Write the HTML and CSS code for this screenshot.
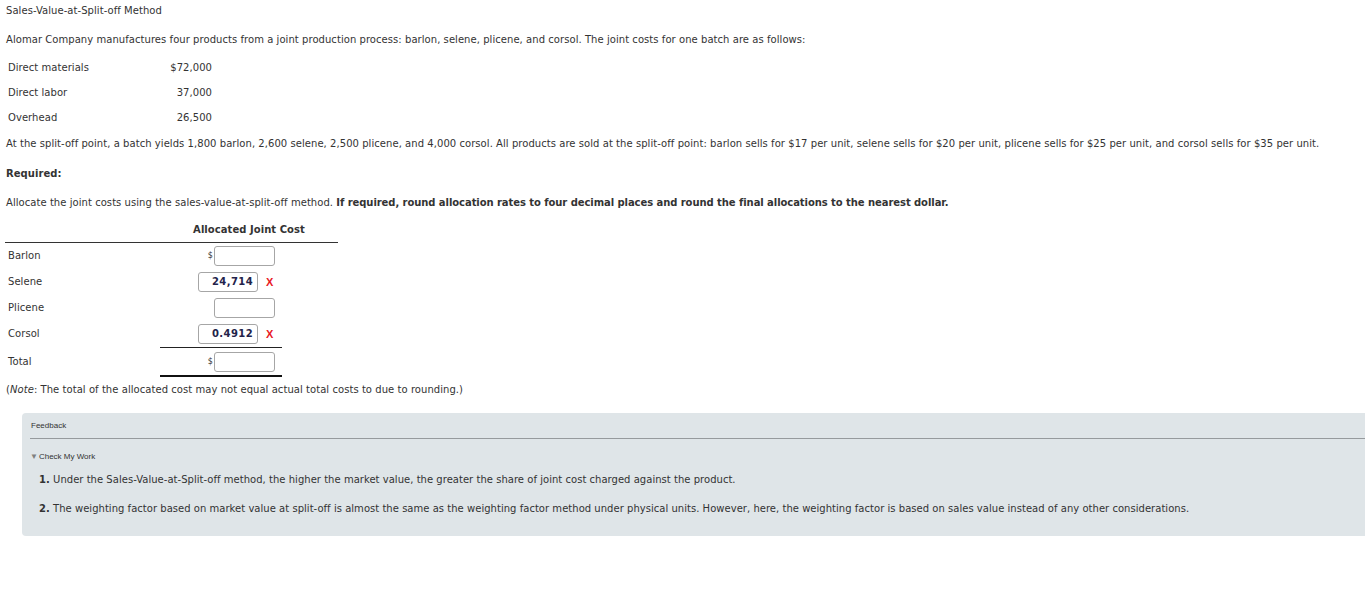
FILE: index.html
```html
<!DOCTYPE html>
<html>
<head>
<meta charset="utf-8">
<link rel="stylesheet" href="styles.css">
</head>
<body>
<div class="page">
  <div class="title">Sales-Value-at-Split-off Method</div>
  <p class="para p1">Alomar Company manufactures four products from a joint production process: barlon, selene, plicene, and corsol. The joint costs for one batch are as follows:</p>
  <div class="costs">
    <div class="cost-label">Direct materials</div><div class="cost-val">$72,000</div>
    <div class="cost-label">Direct labor</div><div class="cost-val">37,000</div>
    <div class="cost-label">Overhead</div><div class="cost-val">26,500</div>
  </div>
  <p class="para p2">At the split-off point, a batch yields 1,800 barlon, 2,600 selene, 2,500 plicene, and 4,000 corsol. All products are sold at the split-off point: barlon sells for $17 per unit, selene sells for $20 per unit, plicene sells for $25 per unit, and corsol sells for $35 per unit.</p>
  <p class="para req">Required:</p>
  <p class="para p3">Allocate the joint costs using the sales-value-at-split-off method. <b>If required, round allocation rates to four decimal places and round the final allocations to the nearest dollar.</b></p>
  <div class="alloc">
    <div class="head-blank"></div><div class="head">Allocated Joint Cost</div>
    <div class="lbl">Barlon</div><div class="val"><span class="dollar">$</span><span class="inp"></span></div><div class="pad"></div>
    <div class="lbl">Selene</div><div class="val"><span class="inp filled">24,714</span><span class="xmark">X</span></div><div class="pad"></div>
    <div class="lbl">Plicene</div><div class="val"><span class="inp"></span></div><div class="pad"></div>
    <div class="lbl">Corsol</div><div class="val sub"><span class="inp filled">0.4912</span><span class="xmark">X</span></div><div class="pad"></div>
    <div class="lbl lbl-total">Total</div><div class="val total"><span class="dollar">$</span><span class="inp"></span></div><div class="pad"></div>
  </div>
  <p class="para note">(<i>Note</i>: The total of the allocated cost may not equal actual total costs to due to rounding.)</p>
  <div class="feedback">
    <div class="fb-head">Feedback</div>
    <div class="fb-body">
      <div class="fb-check"><span class="tri">&#9660;</span>Check My Work</div>
      <p class="fb-item"><b>1.</b> Under the Sales-Value-at-Split-off method, the higher the market value, the greater the share of joint cost charged against the product.</p>
      <p class="fb-item"><b>2.</b> The weighting factor based on market value at split-off is almost the same as the weighting factor method under physical units. However, here, the weighting factor is based on sales value instead of any other considerations.</p>
    </div>
  </div>
</div>
</body>
</html>
```
FILE: styles.css
```css
html, body {
  margin: 0;
  padding: 0;
  background: #ffffff;
}
body {
  font-family: "DejaVu Sans", Verdana, sans-serif;
  font-size: 10px;
  line-height: 14px;
  color: #333333;
  letter-spacing: 0.055px;
}
.page {
  padding: 4px 0 0 6px;
}
.title {
  height: 14px;
}
.para {
  margin: 0;
  white-space: nowrap;
}
.p1 { margin-top: 15px; }
.costs {
  margin-top: 8px;
  display: grid;
  grid-template-columns: 140px 66px;
  grid-auto-rows: 25px;
  align-items: center;
}
.cost-label { padding-left: 2px; }
.cost-val { text-align: right; }
.p2 { margin-top: 7px; }
.req { margin-top: 16px; font-weight: bold; }
.p3 { margin-top: 15px; }
.p3 b { font-weight: bold; letter-spacing: -0.065px; }
.alloc {
  margin-top: 13px;
  margin-left: -1px;
  display: grid;
  grid-template-columns: 155px 122px 56px;
  width: 333px;
}
.head {
  grid-column: 2 / span 2;
  font-weight: bold;
  text-align: center;
  height: 19px;
  line-height: 14px;
  border-bottom: 1px solid #333;
}
.head-blank {
  height: 19px;
  border-bottom: 1px solid #333;
}
.lbl {
  height: 26px;
  line-height: 26px;
  padding-left: 3px;
}
.val {
  height: 26px;
  display: flex;
  align-items: center;
  justify-content: flex-end;
  padding-right: 7px;
}
.val.sub {
  border-bottom: 1px solid #222;
}
.lbl-total { line-height: 28px; height: 28px; }
.val.total {
  height: 27px;
  border-bottom: 2px solid #111;
}
.pad { height: 26px; }
.dollar {
  font-size: 8px;
  color: #333;
  margin-right: 1px;
  line-height: 10px;
}
.inp {
  display: inline-block;
  box-sizing: border-box;
  width: 61px;
  height: 20px;
  border: 1px solid #a6a6a6;
  border-radius: 3px;
  background: #fff;
  font-weight: bold;
  color: #23234a;
  text-align: right;
  padding-right: 4px;
  line-height: 18px;
  letter-spacing: 0.4px;
}
.inp.filled { width: 60px; }
.xmark {
  color: #e8171e;
  font-weight: bold;
  font-family: "Liberation Sans", Arial, sans-serif;
  font-size: 11px;
  margin-left: 8px;
  width: 9px;
}
.note { margin-top: 6px; }
.feedback {
  margin-top: 16px;
  margin-left: 16px;
  background: #dfe5e8;
  border-radius: 4px 0 0 4px;
  height: 123px;
  box-sizing: border-box;
  padding: 7px 0 0 8px;
}
.fb-head {
  font-family: "Liberation Sans", Arial, sans-serif;
  font-size: 8px;
  line-height: 12px;
  color: #333;
  padding-left: 1px;
  height: 18px;
  border-bottom: 1px solid #969a9d;
  letter-spacing: 0;
}
.fb-body {
  padding-left: 0;
}
.fb-check {
  margin-top: 12px;
  font-family: "Liberation Sans", Arial, sans-serif;
  font-size: 8px;
  line-height: 12px;
  color: #333;
  letter-spacing: 0;
}
.tri {
  color: #808080;
  font-size: 8px;
  margin-right: 1px;
}
.fb-item {
  margin: 0;
  padding-left: 9px;
  white-space: nowrap;
  letter-spacing: 0.03px;
}
.fb-check + .fb-item { margin-top: 10px; }
.fb-item + .fb-item { margin-top: 15px; }
```
